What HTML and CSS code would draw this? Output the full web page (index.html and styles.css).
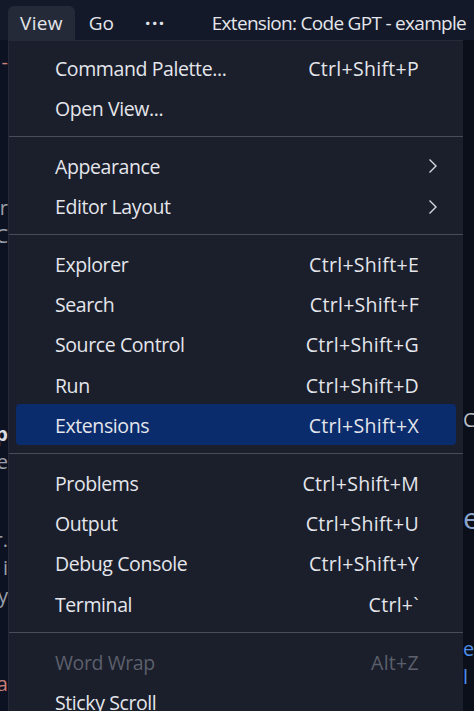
FILE: index.html
```html
<html>
<head>
	<title>View menu</title>
	<link rel="stylesheet" href="styles.css">
</head>
<body>
  <div class="titlebar">
    <span class="top-item active">View</span>
    <span class="top-item">Go</span>
    <span class="top-item more">&middot;&middot;&middot;</span>
    <span class="window-title">Extension: Code GPT - example</span>
  </div>

  <div class="workspace">
    <div class="side left">
      <span class="frag red" style="margin-top: 8px">-</span>
      <span class="frag" style="margin-top: 118px">r</span>
      <span class="frag">C</span>
      <span class="frag bold" style="margin-top: 170px">p</span>
      <span class="frag">te</span>
      <span class="frag" style="margin-top: 50px">r.</span>
      <span class="frag">i</span>
      <span class="frag">y</span>
      <span class="frag red" style="margin-top: 60px">ia</span>
    </div>

    <div class="menu">
      <div class="row"><span class="label">Command Palette...</span><span class="key">Ctrl+Shift+P</span></div>
      <div class="row"><span class="label">Open View...</span><span class="key"></span></div>
      <div class="sep"></div>
      <div class="row"><span class="label">Appearance</span><span class="key"></span>
        <svg class="chev" width="10" height="16" viewBox="0 0 10 16"><polyline points="1.5,1.5 8,8 1.5,14.5" /></svg></div>
      <div class="row"><span class="label">Editor Layout</span><span class="key"></span>
        <svg class="chev" width="10" height="16" viewBox="0 0 10 16"><polyline points="1.5,1.5 8,8 1.5,14.5" /></svg></div>
      <div class="sep"></div>
      <div class="row"><span class="label">Explorer</span><span class="key">Ctrl+Shift+E</span></div>
      <div class="row"><span class="label">Search</span><span class="key">Ctrl+Shift+F</span></div>
      <div class="row"><span class="label">Source Control</span><span class="key">Ctrl+Shift+G</span></div>
      <div class="row"><span class="label">Run</span><span class="key">Ctrl+Shift+D</span></div>
      <div class="row selected"><span class="label">Extensions</span><span class="key">Ctrl+Shift+X</span></div>
      <div class="sep"></div>
      <div class="row"><span class="label">Problems</span><span class="key">Ctrl+Shift+M</span></div>
      <div class="row"><span class="label">Output</span><span class="key">Ctrl+Shift+U</span></div>
      <div class="row"><span class="label">Debug Console</span><span class="key">Ctrl+Shift+Y</span></div>
      <div class="row"><span class="label">Terminal</span><span class="key">Ctrl+`</span></div>
      <div class="sep"></div>
      <div class="row disabled"><span class="label">Word Wrap</span><span class="key">Alt+Z</span></div>
      <div class="row"><span class="label">Sticky Scroll</span><span class="key"></span></div>
    </div>

    <div class="side right">
      <span class="frag grey" style="margin-top: 366px">C</span>
      <span class="frag blue big" style="margin-top: 70px">e</span>
      <span class="frag blue" style="margin-top: 103px">er</span>
      <span class="frag blue">l</span>
    </div>
  </div>
</body>
</html>
```

FILE: styles.css
```css
body {
	padding: 0;
	margin: 0;
	width: 474px;
	height: 711px;
	overflow: hidden;
	background-color: #0d1222;
	font-family: "Open Sans", "Noto Sans", sans-serif;
	color: #e4e6eb;
}
.titlebar {
	height: 40px;
	display: flex;
	align-items: flex-end;
	background-color: #131929;
	font-size: 19px;
	white-space: nowrap;
	overflow: hidden;
}
.top-item {
	height: 34px;
	line-height: 34px;
	padding: 0 12px;
	margin-left: 2px;
	border-radius: 6px 6px 0 0;
}
.top-item:first-child {
	margin-left: 8px;
	letter-spacing: 0.3px;
}
.top-item.active {
	background-color: #252a39;
}
.top-item.more {
	padding: 0 20px 0 17px;
	letter-spacing: 1.5px;
	font-weight: bold;
}
.window-title {
	height: 34px;
	line-height: 34px;
	margin-left: 26px;
	letter-spacing: -0.7px;
}
.workspace {
	display: flex;
	height: 671px;
}
.side {
	display: flex;
	flex-direction: column;
	overflow: hidden;
	font-size: 20px;
	line-height: 28px;
	color: #9aa0ab;
}
.side.left {
	width: 8px;
	align-items: flex-end;
}
.side.right {
	width: 11px;
	background-color: #0b0f1a;
}
.frag.red { color: #c9807a; }
.frag.bold { font-weight: bold; color: #d8dbe2; }
.frag.blue { color: #4d8ee8; }
.frag.big { font-size: 30px; color: #8aa4cc; }
.frag.grey { color: #b9bdc6; }
.menu {
	width: 441px;
	padding: 6px 7px 0;
	background-color: #1b1e2b;
	border-left: 1px solid #262a38;
	border-top: 1px solid #262a38;
	font-size: 19.5px;
}
.row {
	height: 40.3px;
	box-sizing: border-box;
	padding-top: 2px;
	display: grid;
	grid-template-columns: 1fr auto 37px;
	align-items: center;
	padding-left: 39px;
	border-radius: 4px;
}
.row.selected {
	background-color: #0a2b6c;
}
.row.disabled {
	color: #5b606c;
}
.label {
	letter-spacing: -0.4px;
}
.key {
	text-align: right;
	letter-spacing: 0.3px;
}
.chev {
	margin-left: 9px;
	fill: none;
	stroke: #d6d9df;
	stroke-width: 1.4;
}
.sep {
	height: 1px;
	margin: 8.25px -7px;
	background-color: #474c58;
}
```
